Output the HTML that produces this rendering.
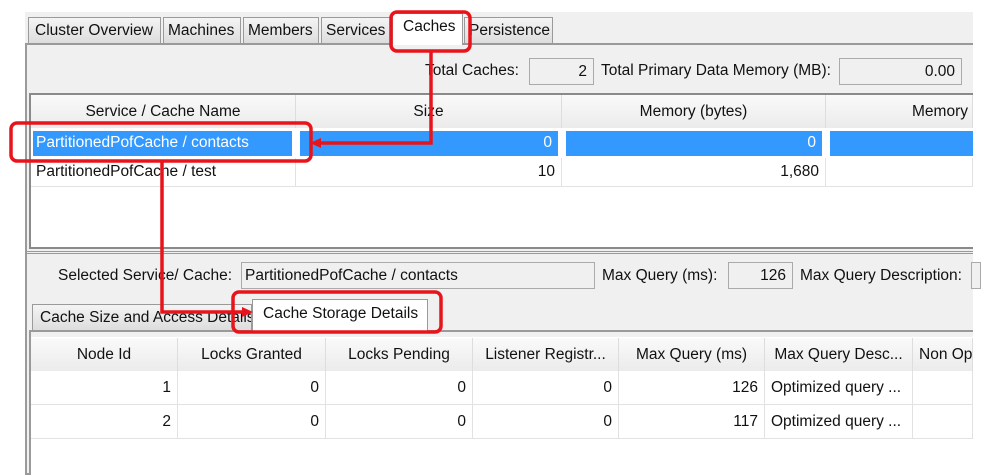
<!DOCTYPE html><html><head><style>
body{margin:0;width:985px;height:475px;background:#fff;position:relative;overflow:hidden;font-family:"Liberation Sans","DejaVu Sans",sans-serif;font-size:15.5px;color:#111}
div{position:absolute;box-sizing:border-box}
.tab{top:17px;height:27px;background:linear-gradient(#f4f4f4,#dcdcdc);border:1px solid #9a9a9a;border-bottom:none;padding:4px 0 0 6px;white-space:nowrap;overflow:hidden}
.fld{background:#f0f0f0;border:1px solid #aaa;text-align:right;padding:4px 6px 0 0;height:27px}
.lbl{white-space:nowrap}
.hd{background:linear-gradient(#fafafa,#ebebeb);border-right:1px solid #ddd;text-align:center;padding-top:8px;height:33px;white-space:nowrap;overflow:hidden}
.c{border-right:1px solid #e2e2e2;border-bottom:1px solid #e2e2e2;text-align:right;padding:8px 6px 0 0;white-space:nowrap;overflow:hidden;background:#fff}
.sel{background:#3399ff;color:#fff;border:none}
</style></head><body>
<div style="left:25px;top:12px;width:948px;height:463px;background:#f0f0f0"></div>
<div class="tab" style="left:28px;width:133px">Cluster Overview</div>
<div class="tab" style="left:163px;width:78px;padding-left:4px">Machines</div>
<div class="tab" style="left:243px;width:76px;padding-left:4px">Members</div>
<div class="tab" style="left:321px;width:70px;padding-left:4px">Services</div>
<div class="tab" style="left:464px;width:89px;padding-left:4px">Persistence</div>
<div style="left:25px;top:43px;width:948px;height:432px;border:2px solid #9a9a9a;border-right:none;background:#f0f0f0"></div>
<div class="tab" style="left:392px;top:13px;width:71px;height:32px;background:#fff;padding:4px 0 0 10px">Caches</div>
<div class="lbl" style="left:425px;top:62px">Total Caches:</div>
<div class="fld" style="left:529px;top:58px;width:65px">2</div>
<div class="lbl" style="left:601px;top:62px">Total Primary Data Memory (MB):</div>
<div class="fld" style="left:839px;top:58px;width:123px">0.00</div>
<div style="left:29px;top:93px;width:944px;height:156px;background:#fff;border:2px solid #8a8a8a;border-right:none"></div>
<div class="hd" style="left:31px;top:95px;width:265px">Service / Cache Name</div>
<div class="hd" style="left:296px;top:95px;width:266px">Size</div>
<div class="hd" style="left:562px;top:95px;width:264px">Memory (bytes)</div>
<div class="hd" style="left:826px;top:95px;width:147px;text-align:right;padding-right:4px">Memory</div>
<div class="c sel" style="left:33px;top:131px;width:259px;height:25px;text-align:left;padding:3px 0 0 3px">PartitionedPofCache / contacts</div>
<div class="c sel" style="left:300px;top:131px;width:258px;height:25px;padding-top:3px">0</div>
<div class="c sel" style="left:566px;top:131px;width:256px;height:25px;padding-top:3px">0</div>
<div class="c sel" style="left:830px;top:131px;width:143px;height:25px"></div>
<div class="c" style="left:31px;top:158px;width:265px;height:29px;text-align:left;padding:5px 0 0 5px">PartitionedPofCache / test</div>
<div class="c" style="left:296px;top:158px;width:266px;height:29px;padding-top:5px">10</div>
<div class="c" style="left:562px;top:158px;width:264px;height:29px;padding-top:5px">1,680</div>
<div class="c" style="left:826px;top:158px;width:147px;height:29px"></div>
<div style="left:27px;top:251px;width:946px;height:3px;border-top:1px solid #999;border-bottom:1px solid #999"></div>
<div class="lbl" style="left:58px;top:267px">Selected Service/ Cache:</div>
<div class="fld" style="left:241px;top:262px;width:354px;text-align:left;padding-left:3px">PartitionedPofCache / contacts</div>
<div class="lbl" style="left:602px;top:267px">Max Query (ms):</div>
<div class="fld" style="left:728px;top:262px;width:65px">126</div>
<div class="lbl" style="left:800px;top:267px">Max Query Description:</div>
<div class="fld" style="left:971px;top:262px;width:10px"></div>
<div class="tab" style="left:32px;top:304px;width:220px;height:27px;padding-left:7px">Cache Size and Access Details</div>
<div style="left:29px;top:330px;width:944px;height:145px;border:2px solid #9a9a9a;border-right:none;border-bottom:none;background:#fff"></div>
<div class="tab" style="left:252px;top:299px;width:176px;height:33px;background:#fff;padding:5px 0 0 10px">Cache Storage Details</div>
<div style="left:31px;top:332px;width:942px;height:5px;background:#f0f0f0"></div>
<div class="hd" style="left:31px;top:338px;width:147px">Node Id</div>
<div class="hd" style="left:178px;top:338px;width:148px">Locks Granted</div>
<div class="hd" style="left:326px;top:338px;width:147px">Locks Pending</div>
<div class="hd" style="left:473px;top:338px;width:146px">Listener Registr...</div>
<div class="hd" style="left:619px;top:338px;width:146px">Max Query (ms)</div>
<div class="hd" style="left:765px;top:338px;width:148px">Max Query Desc...</div>
<div class="hd" style="left:913px;top:338px;width:60px;text-align:left;padding-left:6px">Non Op</div>
<div class="c" style="left:31px;top:371px;width:147px;height:34px">1</div>
<div class="c" style="left:178px;top:371px;width:148px;height:34px">0</div>
<div class="c" style="left:326px;top:371px;width:147px;height:34px">0</div>
<div class="c" style="left:473px;top:371px;width:146px;height:34px">0</div>
<div class="c" style="left:619px;top:371px;width:146px;height:34px">126</div>
<div class="c" style="left:765px;top:371px;width:148px;height:34px;text-align:left;padding-left:6px">Optimized query ...</div>
<div class="c" style="left:913px;top:371px;width:60px;height:34px"></div>
<div class="c" style="left:31px;top:405px;width:147px;height:34px">2</div>
<div class="c" style="left:178px;top:405px;width:148px;height:34px">0</div>
<div class="c" style="left:326px;top:405px;width:147px;height:34px">0</div>
<div class="c" style="left:473px;top:405px;width:146px;height:34px">0</div>
<div class="c" style="left:619px;top:405px;width:146px;height:34px">117</div>
<div class="c" style="left:765px;top:405px;width:148px;height:34px;text-align:left;padding-left:6px">Optimized query ...</div>
<div class="c" style="left:913px;top:405px;width:60px;height:34px"></div>
<svg style="position:absolute;left:0;top:0" width="985" height="475">
<g fill="none" stroke="#e8141b" stroke-width="3.5">
<rect x="391" y="12" width="79" height="39" rx="6"/>
<rect x="11" y="123" width="300" height="38" rx="6"/>
<rect x="233" y="292" width="208" height="40" rx="6"/>
<polyline points="431,51 431,143 320,143"/>
<polyline points="162,161 162,312 244,312"/>
</g>
<g fill="#e8141b"><polygon points="310,143 321,138 321,148"/><polygon points="253,312 242,307 242,317"/></g>
</svg>
</body></html>
